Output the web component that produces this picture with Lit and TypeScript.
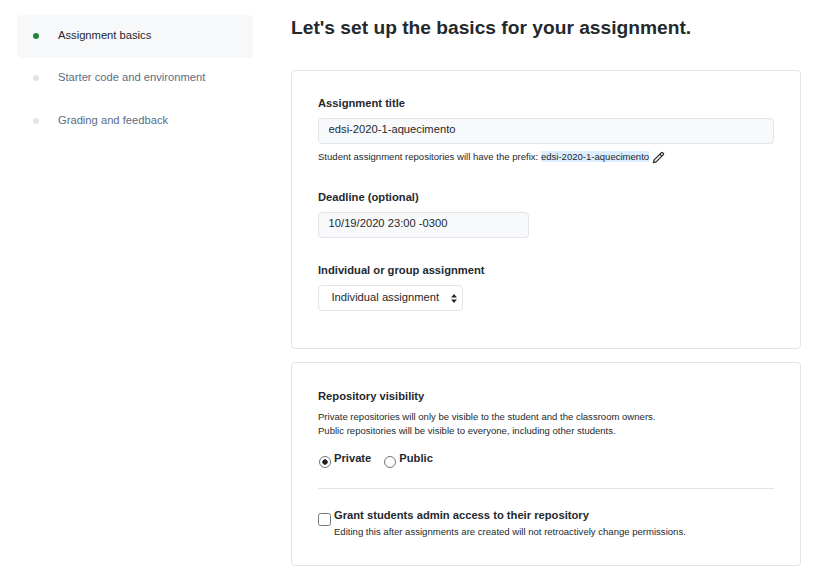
import { LitElement, html, css } from "lit";
import { customElement } from "lit/decorators.js";

@customElement("app-root")
export class AppRoot extends LitElement {
  static styles = css`
    :host { display: block; width: 817px; height: 574px; overflow: hidden; background: #fff; color: #24292e; font-family: "Liberation Sans", Arial, sans-serif; font-size: 11.2px; box-sizing: border-box; }
    * { box-sizing: border-box; }
    .page { display: flex; padding: 15px 16px 0 17px; gap: 38px; }
    nav { width: 236px; flex: none; display: flex; flex-direction: column; }
    .step { height: 43px; display: flex; align-items: center; padding: 0 0 1px 16px; gap: 19px; border-radius: 4px; color: #586069; margin-bottom: -0.25px; }
    .step:first-child { margin-bottom: -0.75px; }
    .label { position: relative; top: -1px; }
    .step.active { background: #f6f8fa; color: #24292e; }
    .step:not(.active) .label { color: #5a6c85; }
    .dot { width: 6px; height: 6px; border-radius: 50%; background: #e1e4e8; flex: none; }
    .active .dot { background: #22863a; }
    main { width: 510px; flex: none; }
    h1 { margin: 0; font-size: 19.2px; line-height: 26px; font-weight: 700; }
    .card { border: 1px solid #e1e4e8; border-radius: 4px; padding: 24px 26px 0; }
    .basics { margin-top: 29px; height: 279px; }
    .vis { margin-top: 13px; height: 204px; padding-top: 25px; }
    label.t { display: block; font-weight: 700; line-height: 17px; }
    .input { display: block; height: 26px; margin-top: 6px; padding: 0 9.6px 5px; font: 11.2px "Liberation Sans", Arial, sans-serif; color: #24292e; background: #f8f9fb; border: 1px solid #e1e4e8; border-radius: 4px; width: 100%; outline: none; }
    .input.short { width: 211px; }
    .note { font-size: 9.55px; line-height: 14px; color: #24292e; margin-top: 6px; display: flex; align-items: center; gap: 3px; }
    .note mark { background: #dbedff; color: inherit; }
    .pencil { width: 13px; height: 13px; flex: none; fill: #24292e; }
    .gap1 { margin-top: 25px; }
    .gap2 { margin-top: 24px; }
    .selectwrap { position: relative; width: 145px; height: 26px; margin-top: 6px; }
    .select { appearance: none; -webkit-appearance: none; display: block; width: 100%; height: 100%; padding: 0 0 2px 12.5px; font: 11.2px "Liberation Sans", Arial, sans-serif; color: #24292e; background: #fff; border: 1px solid #e1e4e8; border-radius: 4px; outline: none; }
    .caret { position: absolute; right: 5px; top: 9px; width: 8px; height: 9px; pointer-events: none; }
    .desc { font-size: 9.55px; line-height: 14px; margin-top: 5px; color: #24292e; }
    .radios { display: flex; margin-top: 13px; align-items: flex-start; }
    .radios label { display: flex; font-weight: 700; line-height: 15px; margin-right: 12px; }
    input[type="radio"] { appearance: none; -webkit-appearance: none; margin: 5px 3px 0 1px; width: 12px; height: 12px; flex: none; border: 1px solid #767676; border-radius: 50%; background: #fff; }
    input[type="radio"]:checked { background: radial-gradient(circle, #222 0 2.4px, #fff 3px); }
    hr { border: 0; border-top: 1px solid #e1e4e8; margin: 20px 0 0; }
    .grant { display: flex; margin-top: 19px; }
    .grant input { appearance: none; -webkit-appearance: none; margin: 5px 3px 0 0; width: 13px; height: 13px; flex: none; border: 1px solid #767676; border-radius: 2.5px; background: #fff; }
    .grant b { display: block; line-height: 14px; }
    .grant span { display: block; font-size: 9.55px; line-height: 14px; margin-top: 3px; }
  `;

  render() {
    return html`
      <div class="page">
        <nav>
          <div class="step active"><span class="dot"></span><span class="label">Assignment basics</span></div>
          <div class="step"><span class="dot"></span><span class="label">Starter code and environment</span></div>
          <div class="step"><span class="dot"></span><span class="label">Grading and feedback</span></div>
        </nav>
        <main>
          <h1>Let's set up the basics for your assignment.</h1>
          <section class="card basics">
            <label class="t">Assignment title</label>
            <input class="input" .value=${"edsi-2020-1-aquecimento"} />
            <div class="note">
              <span>Student assignment repositories will have the prefix: <mark>edsi-2020-1-aquecimento</mark></span>
              <svg class="pencil" viewBox="0 0 16 16"><path fill-rule="evenodd" d="M11.013 1.427a1.75 1.75 0 012.474 0l1.086 1.086a1.75 1.75 0 010 2.474l-8.61 8.61c-.21.21-.47.364-.756.445l-3.251.93a.75.75 0 01-.927-.928l.929-3.25a1.75 1.75 0 01.445-.758l8.61-8.61zm1.414 1.06a.25.25 0 00-.354 0L10.811 3.75l1.439 1.44 1.263-1.263a.25.25 0 000-.354l-1.086-1.086zM11.189 6.25L9.75 4.81l-6.286 6.287a.25.25 0 00-.064.108l-.558 1.953 1.953-.558a.249.249 0 00.108-.064l6.286-6.286z"/></svg>
            </div>
            <label class="t gap1">Deadline (optional)</label>
            <input class="input short" .value=${"10/19/2020 23:00 -0300"} />
            <label class="t gap2">Individual or group assignment</label>
            <div class="selectwrap">
              <select class="select"><option>Individual assignment</option><option>Group assignment</option></select>
              <svg class="caret" viewBox="0 0 8 9" fill="#24292e"><path d="M4 0l3 3.500H1zM4 9L1 5.500h6z"/></svg>
            </div>
          </section>
          <section class="card vis">
            <label class="t">Repository visibility</label>
            <div class="desc">Private repositories will only be visible to the student and the classroom owners.<br />Public repositories will be visible to everyone, including other students.</div>
            <div class="radios">
              <label><input type="radio" name="v" checked />Private</label>
              <label><input type="radio" name="v" />Public</label>
            </div>
            <hr />
            <div class="grant">
              <input type="checkbox" />
              <div><b>Grant students admin access to their repository</b><span>Editing this after assignments are created will not retroactively change permissions.</span></div>
            </div>
          </section>
        </main>
      </div>
    `;
  }
}
